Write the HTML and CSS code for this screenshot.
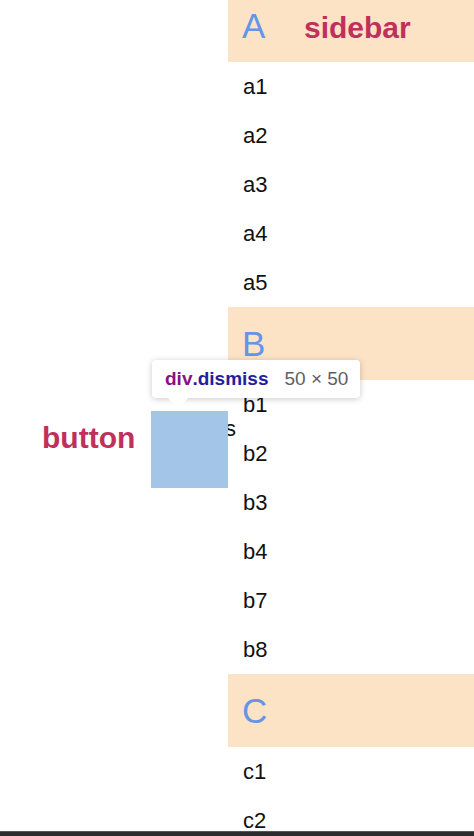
FILE: index.html
```html
<!DOCTYPE html>
<html>
<head>
<meta charset="utf-8">
<link rel="stylesheet" href="styles.css">
</head>
<body>
<div class="page">
  <div class="main">
    <div class="row">
      <span class="label">button</span>
      <div class="dismiss">
        <span class="dismiss-text">dismiss</span>
        <div class="highlight"></div>
        <div class="tooltip">
          <span class="tag">div</span><span class="cls">.dismiss</span><span class="size">50 × 50</span>
        </div>
      </div>
    </div>
  </div>
  <div class="sidebar">
    <span class="label sidebar-label">sidebar</span>
    <div class="list">
      <div class="group-head">A</div>
      <div class="item">a1</div>
      <div class="item">a2</div>
      <div class="item">a3</div>
      <div class="item">a4</div>
      <div class="item">a5</div>
      <div class="group-head">B</div>
      <div class="item">b1</div>
      <div class="item">b2</div>
      <div class="item">b3</div>
      <div class="item">b4</div>
      <div class="item">b7</div>
      <div class="item">b8</div>
      <div class="group-head">C</div>
      <div class="item">c1</div>
      <div class="item">c2</div>
    </div>
  </div>
</div>
<div class="bottom-bar"></div>
</body>
</html>
```

FILE: styles.css
```css
html, body {
  margin: 0;
  padding: 0;
  background: #ffffff;
  font-family: "Liberation Sans", Arial, sans-serif;
  width: 474px;
  height: 836px;
  overflow: hidden;
}

.page {
  display: flex;
  height: 831px;
  overflow: hidden;
}

.main {
  width: 228px;
  flex: none;
  padding-top: 411px;
  box-sizing: border-box;
  position: relative;
  z-index: 2;
}

.row {
  display: flex;
  align-items: flex-start;
  padding-left: 42px;
}

.label {
  font-weight: bold;
  font-size: 30px;
  line-height: 34px;
  color: #c0305c;
}

.row .label {
  margin-top: 10px;
}

.dismiss {
  position: relative;
  width: 77px;
  height: 77px;
  margin-left: auto;
}

.dismiss-text {
  position: absolute;
  right: -8px;
  top: 6px;
  font-size: 22px;
  line-height: 24px;
  color: #111;
  white-space: nowrap;
}

.highlight {
  position: absolute;
  inset: 0;
  background: #a2c5e8;
}

.tooltip {
  position: absolute;
  left: 1px;
  top: -51px;
  height: 38px;
  display: flex;
  align-items: center;
  padding: 0 12px 0 13px;
  background: #fff;
  border-radius: 4px;
  box-shadow: 0 1px 6px rgba(0, 0, 0, 0.22);
  white-space: nowrap;
  font-size: 19px;
}

.tooltip::after {
  content: "";
  position: absolute;
  left: 16px;
  top: 38px;
  border-left: 10px solid transparent;
  border-right: 10px solid transparent;
  border-top: 11px solid #fff;
}

.tag {
  font-weight: bold;
  color: #881280;
}

.cls {
  font-weight: bold;
  color: #1f1fa0;
}

.size {
  margin-left: 16px;
  color: #5f5f5f;
}

.sidebar {
  width: 246px;
  flex: none;
  position: relative;
  overflow: hidden;
}

.sidebar-label {
  position: absolute;
  left: 76px;
  top: 11px;
  z-index: 1;
}

.list {
  margin-top: -11px;
}

.group-head {
  height: 73px;
  line-height: 73px;
  padding-left: 14px;
  background: #fde3c6;
  color: #6495e8;
  font-size: 35px;
}

.item {
  height: 49px;
  line-height: 50px;
  padding-left: 15px;
  font-size: 22px;
  color: #111;
}

.bottom-bar {
  height: 5px;
  background: #2c2c2e;
  border-top: 1px solid #555;
  box-sizing: border-box;
}
```
